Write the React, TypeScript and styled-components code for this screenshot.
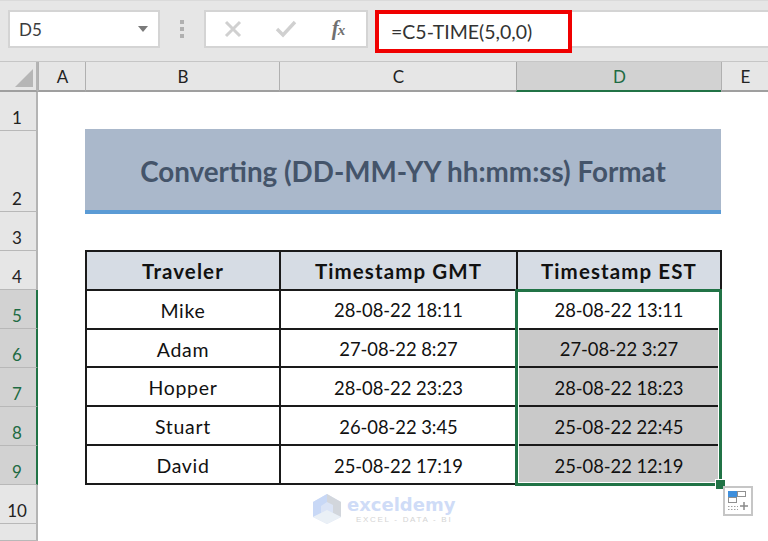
import React from "react";
import styled, { createGlobalStyle } from "styled-components";

const Global = createGlobalStyle`
  html, body { margin: 0; padding: 0; background: #fff; }
  body { width: 768px; height: 541px; overflow: hidden; font-family: "Lato", "Liberation Sans", sans-serif; }
`;

const Page = styled.div`
  width: 768px;
  height: 541px;
  display: flex;
  flex-direction: column;
  overflow: hidden;
  background: #fff;
`;

const Toolbar = styled.div`
  height: 62px;
  flex: none;
  box-sizing: border-box;
  background: #e6e6e6;
  border-top: 1px solid #dadada;
  border-bottom: 1px solid #c6c6c6;
  padding: 9px 0 0 8px;
  display: flex;
  align-items: flex-start;
`;

const NameBox = styled.div`
  width: 152px;
  height: 38px;
  box-sizing: border-box;
  background: #fff;
  border: 2px solid #d4d4d4;
  display: flex;
  align-items: center;
  justify-content: space-between;
  padding: 0 10px 0 9px;
  font-size: 17px;
  color: #3c3c3c;
`;

const Caret = styled.span`
  width: 0;
  height: 0;
  border-left: 5.5px solid transparent;
  border-right: 5.5px solid transparent;
  border-top: 6px solid #7a7a7a;
`;

const Grip = styled.div`
  width: 44px;
  height: 38px;
  flex: none;
  display: flex;
  flex-direction: column;
  align-items: center;
  justify-content: center;
  gap: 3px;
  & > span { width: 4px; height: 4px; background: #b0b0b0; }
`;

const FxButtons = styled.div`
  width: 164px;
  height: 38px;
  box-sizing: border-box;
  background: #fff;
  border: 2px solid #d4d4d4;
  display: flex;
  align-items: center;
  margin-right: 7px;
`;

const FxSlot = styled.div`
  width: 53px;
  display: flex;
  justify-content: center;
  align-items: center;
`;

const FxText = styled.span`
  font-family: "Liberation Serif", serif;
  font-style: italic;
  font-weight: 700;
  font-size: 21px;
  line-height: 22px;
  color: #707070;
  & > small { font-size: 15px; margin-left: -1px; }
`;

const FormulaBar = styled.div`
  flex: 1;
  height: 38px;
  box-sizing: border-box;
  background: #fff;
  border: 2px solid #d4d4d4;
  border-right: 0;
  position: relative;
`;

const Highlight = styled.div`
  position: absolute;
  left: -2px;
  top: -2px;
  width: 197px;
  height: 43px;
  box-sizing: border-box;
  border: 4px solid #f00000;
  display: flex;
  align-items: center;
  padding-left: 12px;
  font-size: 19.5px;
  color: #333;
  background: #fff;
`;

const Sheet = styled.div`
  flex: 1;
  display: grid;
  grid-template-columns: 38px 47px 194px 237px 205px 47px;
  grid-template-rows: 30px 39px 81px 39px repeat(6, 39px) 39px 1fr;
  position: relative;
`;

const Corner = styled.div`
  grid-column: 1;
  grid-row: 1;
  box-sizing: border-box;
  background: #e6e6e6;
  border-right: 2px solid #b4b4b4;
  border-bottom: 2px solid #9f9f9f;
  position: relative;
  &::after {
    content: "";
    position: absolute;
    right: 3px;
    bottom: 3px;
    width: 0;
    height: 0;
    border-left: 18px solid transparent;
    border-bottom: 18px solid #b6b6b6;
  }
`;

const ColHead = styled.div<{ $on?: boolean }>`
  grid-row: 1;
  box-sizing: border-box;
  background: ${(p) => (p.$on ? "#d2d2d2" : "#e6e6e6")};
  border-left: ${(p) => (p.$on ? "1px solid #a8a8a8" : "1px solid #b0b0b0")};
  border-bottom: 2px solid ${(p) => (p.$on ? "#217346" : "#9f9f9f")};
  display: flex;
  align-items: center;
  justify-content: center;
  padding: 1px 0 0 1px;
  font-size: 17px;
  color: ${(p) => (p.$on ? "#1e6b43" : "#222")};
`;

const RowHead = styled.div<{ $on?: boolean; $row: number }>`
  grid-column: 1;
  grid-row: ${(p) => p.$row};
  box-sizing: border-box;
  background: ${(p) => (p.$on ? "#d2d2d2" : "#e6e6e6")};
  border-right: 2px solid ${(p) => (p.$on ? "#217346" : "#b4b4b4")};
  border-bottom: 1px solid #b8b8b8;
  display: flex;
  align-items: flex-end;
  justify-content: center;
  padding: 0 2px 1px 0;
  font-size: 17px;
  line-height: 22px;
  color: ${(p) => (p.$on ? "#1e6b43" : "#222")};
`;

const Banner = styled.div`
  grid-column: 3 / 6;
  grid-row: 3;
  box-sizing: border-box;
  margin-top: -2px;
  height: 85px;
  background: #aab8cb;
  border-bottom: 4px solid #5b9bd5;
  display: flex;
  align-items: center;
  justify-content: center;
  padding-top: 4px;
  font-size: 27.8px;
  font-weight: 700;
  color: #44546a;
`;

const DataTable = styled.div`
  grid-column: 3 / 6;
  grid-row: 5 / 11;
  box-sizing: border-box;
  margin-top: -1px;
  width: 637px;
  height: 235px;
  display: grid;
  grid-template-columns: 192px 235px 1fr;
  grid-template-rows: repeat(6, 1fr);
  gap: 2px;
  padding: 2px;
  background: #1a1a1a;
`;

const Td = styled.div<{ $head?: boolean; $calc?: boolean; $stamp?: boolean }>`
  background: ${(p) => (p.$head ? "#d6dce4" : p.$calc ? "#c9c9c9" : "#fff")};
  display: flex;
  align-items: center;
  justify-content: center;
  padding-top: 2px;
  font-size: ${(p) => (p.$head ? "20.5px" : p.$stamp ? "18.4px" : "19.5px")};
  letter-spacing: ${(p) => (p.$head ? "1.1px" : p.$stamp ? "-0.05px" : "0.7px")};
  font-weight: ${(p) => (p.$head ? 700 : 400)};
  color: #111;
  white-space: nowrap;
`;

const Selection = styled.div`
  grid-column: 5;
  grid-row: 6 / 11;
  box-sizing: border-box;
  margin: -1px 0 auto -1px;
  width: 207px;
  height: 197px;
  border: 3px solid #217346;
  box-shadow: inset 0 0 0 1px #fff;
  position: relative;
  pointer-events: none;
`;

const Handle = styled.span`
  position: absolute;
  right: -7px;
  bottom: -7px;
  width: 9px;
  height: 9px;
  background: #217346;
  border: 1px solid #fff;
`;

const PasteTag = styled.div`
  position: absolute;
  left: 205px;
  top: 194px;
  width: 30px;
  height: 30px;
  box-sizing: border-box;
  background: #fff;
  border: 2px solid #c6c6c6;
  display: flex;
  align-items: center;
  justify-content: center;
`;

const Watermark = styled.div`
  position: absolute;
  left: 312px;
  top: 431px;
  display: flex;
  align-items: center;
  gap: 5px;
`;

const MarkText = styled.div`
  display: flex;
  flex-direction: column;
  align-items: flex-start;
`;

const MarkName = styled.span`
  font-family: "DejaVu Sans", sans-serif;
  font-weight: 700;
  font-size: 18px;
  line-height: 20px;
  color: #cfdcf7;
`;

const MarkTag = styled.span`
  font-family: "Liberation Sans", sans-serif;
  font-size: 8px;
  line-height: 9px;
  letter-spacing: 1.7px;
  color: #d4d4d4;
  margin-left: 9px;
`;

const rows = [
  ["Mike", "28-08-22 18:11", "28-08-22 13:11"],
  ["Adam", "27-08-22 8:27", "27-08-22 3:27"],
  ["Hopper", "28-08-22 23:23", "28-08-22 18:23"],
  ["Stuart", "26-08-22 3:45", "25-08-22 22:45"],
  ["David", "25-08-22 17:19", "25-08-22 12:19"],
];

export default function App() {
  return (
    <Page>
      <Global />
      <Toolbar>
        <NameBox>
          D5
          <Caret />
        </NameBox>
        <Grip>
          <span />
          <span />
          <span />
        </Grip>
        <FxButtons>
          <FxSlot>
            <svg width="18" height="18" viewBox="0 0 18 18">
              <path d="M2 2 L16 16 M16 2 L2 16" stroke="#d0d0d0" strokeWidth="3" fill="none" />
            </svg>
          </FxSlot>
          <FxSlot>
            <svg width="22" height="18" viewBox="0 0 22 18">
              <path d="M2 9 L8 15 L20 2" stroke="#d0d0d0" strokeWidth="3.4" fill="none" />
            </svg>
          </FxSlot>
          <FxSlot>
            <FxText>
              f<small>x</small>
            </FxText>
          </FxSlot>
        </FxButtons>
        <FormulaBar>
          <Highlight>=C5-TIME(5,0,0)</Highlight>
        </FormulaBar>
      </Toolbar>
      <Sheet>
        <Corner />
        <ColHead>A</ColHead>
        <ColHead>B</ColHead>
        <ColHead>C</ColHead>
        <ColHead $on>D</ColHead>
        <ColHead>E</ColHead>
        {[1, 2, 3, 4, 5, 6, 7, 8, 9, 10].map((n) => (
          <RowHead key={n} $row={n + 1} $on={n >= 5 && n <= 9}>
            {n}
          </RowHead>
        ))}
        <RowHead $row={12} />
        <Banner>Converting (DD-MM-YY hh:mm:ss) Format</Banner>
        <DataTable>
          <Td $head>Traveler</Td>
          <Td $head>Timestamp GMT</Td>
          <Td $head>Timestamp EST</Td>
          {rows.map((r, i) => (
            <React.Fragment key={r[0]}>
              <Td>{r[0]}</Td>
              <Td $stamp>{r[1]}</Td>
              <Td $stamp $calc={i > 0}>{r[2]}</Td>
            </React.Fragment>
          ))}
        </DataTable>
        <Selection>
          <Handle />
          <PasteTag>
            <svg width="22" height="22" viewBox="0 0 22 22">
              <rect x="1" y="1" width="9" height="6" fill="#3f8fdc" />
              <rect x="10.5" y="1.5" width="8" height="5" fill="none" stroke="#909090" />
              <rect x="1.5" y="7.5" width="8" height="5" fill="none" stroke="#909090" />
              <path d="M1 16.5 H11" stroke="#a0a0a0" strokeDasharray="1.5 1.5" />
              <path d="M1 19.5 H11" stroke="#a0a0a0" strokeDasharray="1.5 1.5" />
              <path d="M17 12 V20 M13 16 H21" stroke="#8a8a8a" strokeWidth="1.5" />
            </svg>
          </PasteTag>
        </Selection>
        <Watermark>
          <svg width="30" height="32" viewBox="0 0 30 32">
            <path d="M15 1 L29 9 L29 24 L15 31 L1 24 L1 9 Z" fill="#dbe4f6" />
            <path d="M15 1 L29 9 L29 24 L21 20 L21 12 L15 9 Z" fill="#d2d6dc" />
            <path d="M1 9 L15 1 L15 9 L9 13 L9 20 L1 24 Z" fill="#c8d8f6" />
            <path d="M1 24 L15 17 L29 24 L15 31 Z" fill="#eaf0f6" />
          </svg>
          <MarkText>
            <MarkName>exceldemy</MarkName>
            <MarkTag>EXCEL - DATA - BI</MarkTag>
          </MarkText>
        </Watermark>
      </Sheet>
    </Page>
  );
}
